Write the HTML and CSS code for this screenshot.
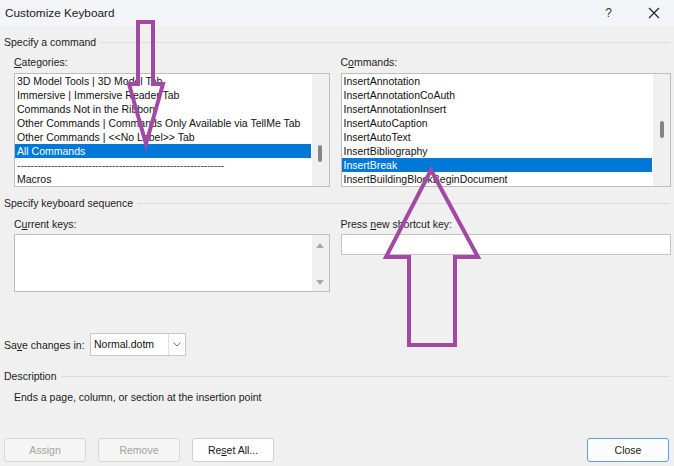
FILE: index.html
```html
<!DOCTYPE html>
<html lang="en">
<head>
    <meta charset="UTF-8">
    <title>Customize Keyboard</title>
    <link rel="stylesheet" href="styles.css">
</head>
<body>
<div class="window">
    <!--title bar-->
    <div class="titlebar">
        <span class="title">Customize Keyboard</span>
        <div class="controls">
            <span class="help">?</span>
            <svg class="close-x" width="12" height="12" viewBox="0 0 12 12">
                <path d="M1 1 L11 11 M11 1 L1 11" stroke="#1f1f1f" stroke-width="1.1" fill="none"/>
            </svg>
        </div>
    </div>

    <div class="content">
        <div class="group-head">Specify a command</div>
        <div class="pair">
            <div class="col col-left">
                <div class="field-label"><u>C</u>ategories:</div>
                <div class="listbox">
                    <ul class="rows">
                        <li>3D Model Tools | 3D Model Tab</li>
                        <li>Immersive | Immersive Reader Tab</li>
                        <li>Commands Not in the Ribbon</li>
                        <li>Other Commands | Commands Only Available via TellMe Tab</li>
                        <li>Other Commands | &lt;&lt;No Label&gt;&gt; Tab</li>
                        <li class="selected">All Commands</li>
                        <li class="dashes">-------------------------------------------------------------</li>
                        <li>Macros</li>
                    </ul>
                    <div class="vscroll"><span class="thumb" style="margin-top: 71px"></span></div>
                </div>
            </div>
            <div class="col col-right">
                <div class="field-label">C<u>o</u>mmands:</div>
                <div class="listbox">
                    <ul class="rows">
                        <li>InsertAnnotation</li>
                        <li>InsertAnnotationCoAuth</li>
                        <li>InsertAnnotationInsert</li>
                        <li>InsertAutoCaption</li>
                        <li>InsertAutoText</li>
                        <li>InsertBibliography</li>
                        <li class="selected">InsertBreak</li>
                        <li>InsertBuildingBlockBeginDocument</li>
                    </ul>
                    <div class="vscroll"><span class="thumb" style="margin-top: 47px"></span></div>
                </div>
            </div>
        </div>

        <div class="group-head gap-top">Specify keyboard sequence</div>
        <div class="pair">
            <div class="col col-left">
                <div class="field-label label-gap">C<u>u</u>rrent keys:</div>
                <div class="keysbox">
                    <div class="keys-area"></div>
                    <div class="keys-scroll">
                        <span class="tri-up"></span>
                        <span class="tri-down"></span>
                    </div>
                </div>
            </div>
            <div class="col col-right">
                <div class="field-label label-gap">Press <u>n</u>ew shortcut key:</div>
                <div class="textbox"></div>
            </div>
        </div>

        <div class="save-row">
            <span class="save-label">Sa<u>v</u>e changes in:</span>
            <div class="combo">
                <span class="combo-text">Normal.dotm</span>
                <span class="combo-btn">
                    <svg width="8" height="5" viewBox="0 0 8 5">
                        <path d="M0.5 0.5 L4 4 L7.5 0.5" stroke="#7a7a7a" stroke-width="1" fill="none"/>
                    </svg>
                </span>
            </div>
        </div>

        <div class="group-head desc-head">Description</div>
        <div class="desc-text">Ends a page, column, or section at the insertion point</div>

        <div class="buttons">
            <div class="btn-group">
                <button class="btn" disabled>Assign</button>
                <button class="btn" disabled>Remove</button>
                <button class="btn">Re<u>s</u>et All...</button>
            </div>
            <button class="btn btn-default">Close</button>
        </div>
    </div>

    <!--annotation arrows-->
    <svg class="marks" width="674" height="466" viewBox="0 0 674 466">
        <polygon points="138,22 153,22 153,84 163,84 146,144 129,84 138,84"
                 fill="none" stroke="#a349a4" stroke-width="4" stroke-linejoin="miter"/>
        <polygon points="431,170 478,257 455,257 455,345 409,345 409,257 386,257"
                 fill="none" stroke="#a349a4" stroke-width="4" stroke-linejoin="miter"/>
    </svg>
</div>
</body>
</html>
```

FILE: styles.css
```css
* {
    margin: 0;
    padding: 0;
    box-sizing: border-box;
}

html, body {
    width: 674px;
    height: 466px;
    overflow: hidden;
}

body {
    font-family: "Liberation Sans", Arial, sans-serif;
    font-size: 10.5px;
    color: #1b1b1b;
    background: #f0f0f0;
}

ul {
    list-style: none;
}

.window {
    position: relative;
    width: 674px;
    height: 466px;
    background: #f0f0f0;
}

/* title bar */
.titlebar {
    height: 26px;
    background: #f3f5f9;
    display: flex;
    align-items: center;
    justify-content: space-between;
    padding-left: 5px;
}

.title {
    font-size: 11.8px;
    color: #1a1a1a;
}

.controls {
    display: flex;
    align-items: center;
    gap: 36px;
    padding-right: 14px;
}

.help {
    font-size: 12px;
    color: #333;
}

.close-x {
    display: block;
}

/* dialog body */
.content {
    padding: 9px 3px 0 4px;
}

.group-head {
    display: flex;
    align-items: center;
    gap: 4px;
    line-height: 14px;
    padding-right: 1px;
}

.group-head::after {
    content: "";
    flex: 1;
    height: 1px;
    background: #dcdcdc;
}

.gap-top {
    margin-top: 9px;
}

.pair {
    display: flex;
    gap: 11px;
    padding-left: 10px;
}

.col-left {
    width: 316px;
}

.col-right {
    width: 331px;
}

.field-label {
    line-height: 14px;
    margin-top: 6px;
    margin-bottom: 4px;
}

.label-gap {
    margin-top: 7px;
    margin-bottom: 3px;
}

.listbox {
    display: flex;
    height: 114px;
    border: 1px solid #bdbdbd;
    background: #fff;
}

.rows {
    flex: 1;
    overflow: hidden;
    white-space: nowrap;
}

.rows li {
    height: 14px;
    line-height: 13px;
    padding: 1px 0 0 2px;
    color: #111;
}

.rows li.selected {
    background: #0078d7;
    color: #fff;
}

.rows li.dashes {
    color: #444;
    letter-spacing: -0.1px;
}

.vscroll {
    width: 17px;
    margin-left: 1px;
    background: #f0f0f0;
    display: flex;
    flex-direction: column;
    align-items: center;
}

.thumb {
    display: block;
    width: 4px;
    height: 17px;
    border-radius: 2px;
    background: #858585;
}

/* current keys */
.keysbox {
    display: flex;
    height: 58px;
    border: 1px solid #bdbdbd;
    background: #fff;
}

.keys-area {
    flex: 1;
}

.keys-scroll {
    width: 17px;
    background: #f0f0f0;
    display: flex;
    flex-direction: column;
    align-items: center;
    justify-content: space-between;
    padding: 8px 0 6px;
}

.tri-up,
.tri-down {
    width: 0;
    height: 0;
    border-left: 4px solid transparent;
    border-right: 4px solid transparent;
}

.tri-up {
    border-bottom: 5px solid #a8a8a8;
}

.tri-down {
    border-top: 5px solid #a8a8a8;
}

.textbox {
    height: 21px;
    border: 1px solid #c3c3c3;
    background: #fff;
}

/* save changes */
.save-row {
    display: flex;
    align-items: center;
    margin-top: 41px;
}

.save-label {
    flex: none;
    width: 86px;
    white-space: nowrap;
}

.combo {
    display: flex;
    width: 96px;
    height: 23px;
    border: 1px solid #c8c8c8;
    background: #fff;
}

.combo-text {
    flex: 1;
    line-height: 21px;
    padding-left: 3px;
    color: #111;
}

.combo-btn {
    width: 17px;
    border-left: 1px solid #e0e0e0;
    display: flex;
    align-items: center;
    justify-content: center;
}

.desc-head {
    margin-top: 13px;
}

.desc-text {
    margin-top: 7px;
    line-height: 14px;
    padding-left: 10px;
}

/* buttons */
.buttons {
    display: flex;
    justify-content: space-between;
    margin-top: 34px;
    padding-right: 2px;
}

.btn-group {
    display: flex;
    gap: 12px;
}

.btn {
    width: 82px;
    height: 24px;
    font-family: inherit;
    font-size: 10.5px;
    color: #1b1b1b;
    background: #fdfdfd;
    border: 1px solid #cfcfcf;
    border-radius: 3px;
}

.btn:disabled {
    color: #a2a2a2;
    background: #f5f5f5;
    border-color: #d6d6d6;
}

.btn-default {
    border-color: #5a9fe2;
}

.marks {
    position: absolute;
    top: 0;
    left: 0;
    pointer-events: none;
}
```
